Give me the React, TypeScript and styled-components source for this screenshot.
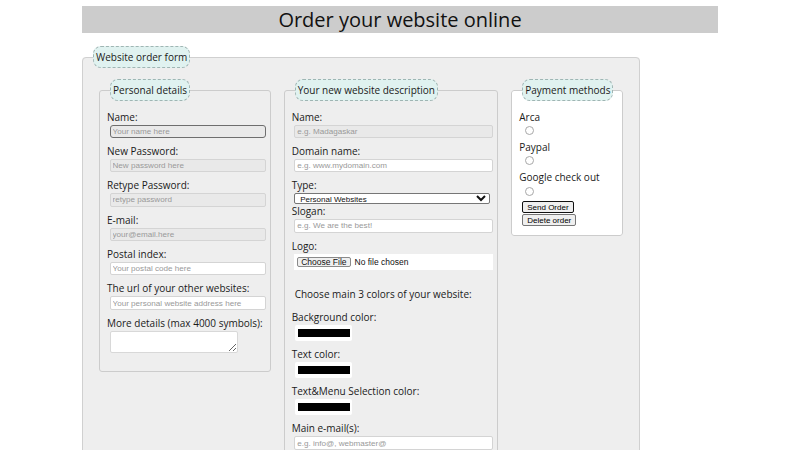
import React from 'react';
import styled, { createGlobalStyle } from 'styled-components';

const GlobalStyle = createGlobalStyle`
    html, body {
        margin: 0;
        padding: 0;
        background: #ffffff;
    }
    body {
        font-family: "Open Sans", "Liberation Sans", sans-serif;
        color: #1a1a1a;
    }
`;

const Page = styled.div`
    width: 636px;
    margin: 6px auto 0;
`;

const Title = styled.h1`
    margin: 0;
    height: 27px;
    background: #cccccc;
    font-size: 20px;
    font-weight: 400;
    line-height: 27px;
    text-align: center;
    color: #111;
`;

const OrderForm = styled.form`
    width: 558px;
    margin-top: 13px;
`;

const OuterSet = styled.fieldset`
    box-sizing: border-box;
    width: 100%;
    min-inline-size: 0;
    margin: 0;
    padding: 11px 10px 24px;
    border: 1px solid #d0d0d0;
    border-radius: 4px;
    background: #eeeeee;
`;

const Legend = styled.legend<{ $offset?: number }>`
    margin-left: ${({ $offset }) => $offset ?? 0}px;
    padding: 3px 2px;
    border: 1px dashed #9fb5b3;
    border-radius: 8px;
    background: #e0f2f0;
    font-size: 10px;
    line-height: 14px;
    color: #1a1a1a;
`;

const Columns = styled.div`
    display: flex;
    align-items: flex-start;
    gap: 13px;
    padding: 0 6px;
`;

const Section = styled.fieldset<{ $width: number; $white?: boolean; $bottom?: number }>`
    box-sizing: border-box;
    width: ${({ $width }) => $width}px;
    min-inline-size: 0;
    margin: 0;
    padding: 8.5px 7px ${({ $bottom }) => $bottom ?? 18}px;
    border: 1px solid #cccccc;
    border-radius: 3px;
    background: ${({ $white }) => ($white ? '#ffffff' : '#eeeeee')};
`;

const Label = styled.label`
    display: block;
    font-size: 10px;
    line-height: 15px;
    white-space: nowrap;
`;

const TextInput = styled.input<{ $width: number; $shaded?: boolean; $active?: boolean }>`
    box-sizing: border-box;
    display: block;
    width: ${({ $width }) => $width}px;
    height: 13.4px;
    margin: 0 0 6px 2.5px;
    padding: 0 2px;
    border: 1px solid ${({ $active }) => ($active ? '#6e6e6e' : '#d4d4d4')};
    border-radius: ${({ $active }) => ($active ? 3 : 2)}px;
    background: ${({ $shaded }) => ($shaded ? '#e9e9e9' : '#ffffff')};
    font: 8.1px "Liberation Sans", Arial, sans-serif;
    color: #333;
    outline: none;

    &::placeholder {
        color: #999999;
    }
`;

const Details = styled.textarea`
    box-sizing: border-box;
    display: block;
    width: 128px;
    height: 22px;
    margin: 0 0 0 2.5px;
    border: 1px solid #d8d8d8;
    border-radius: 2px;
    background: #ffffff;
    font: 8px "Liberation Sans", Arial, sans-serif;
`;

const TypeSelect = styled.select`
    box-sizing: border-box;
    display: block;
    width: 196px;
    height: 11px;
    margin: 0 0 0 2.5px;
    padding: 0 1px;
    border: 1px solid #767676;
    border-radius: 2px;
    background: #ffffff;
    font: 8px "Liberation Sans", Arial, sans-serif;
    color: #111;
`;

const FileBox = styled.div`
    box-sizing: border-box;
    display: flex;
    align-items: center;
    gap: 4px;
    width: 199px;
    height: 16px;
    margin-left: 2.5px;
    padding: 0 3px;
    background: #ffffff;
    font: 8.5px "Liberation Sans", Arial, sans-serif;
    color: #111;
`;

const FileButton = styled.button`
    box-sizing: border-box;
    height: 10px;
    padding: 0 3px;
    border: 1px solid #8a8a8a;
    border-radius: 2px;
    background: #efefef;
    font: inherit;
    line-height: 8px;
    color: #111;
`;

const Hint = styled.p`
    margin: 17.8px 0 8px 3px;
    font-size: 10px;
    line-height: 15px;
`;

const Swatch = styled.span`
    box-sizing: border-box;
    display: block;
    width: 57px;
    height: 16px;
    margin: 0 0 6px 3.5px;
    padding: 4px 2.5px;
    border-radius: 2px;
    background: #ffffff;
`;

const SwatchFill = styled.span<{ $color: string }>`
    display: block;
    height: 100%;
    background: ${({ $color }) => $color};
`;

const Radio = styled.input`
    appearance: none;
    box-sizing: border-box;
    display: block;
    width: 9px;
    height: 9px;
    margin: 1.3px 0 5.2px 5.5px;
    border: 1px solid #a8a8a8;
    border-radius: 50%;
    background: #ffffff;
`;

const Actions = styled.div`
    display: flex;
    flex-direction: column;
    align-items: flex-start;
    gap: 0.7px;
    margin: 1.3px 0 0 3px;
`;

const ActionButton = styled.button<{ $primary?: boolean }>`
    box-sizing: border-box;
    height: 12.3px;
    padding: 0 4px;
    border: ${({ $primary }) => ($primary ? '1.5px solid #111' : '1px solid #767676')};
    border-radius: 2px;
    background: #efefef;
    font: 8px "Liberation Sans", Arial, sans-serif;
    line-height: 9px;
    color: #000;
`;

type Field = { label: string; placeholder: string; shaded?: boolean; active?: boolean };

const personalFields: Field[] = [
    { label: 'Name:', placeholder: 'Your name here', shaded: true, active: true },
    { label: 'New Password:', placeholder: 'New password here', shaded: true },
    { label: 'Retype Password:', placeholder: 'retype password', shaded: true },
    { label: 'E-mail:', placeholder: 'your@email.here', shaded: true },
    { label: 'Postal index:', placeholder: 'Your postal code here' },
    { label: 'The url of your other websites:', placeholder: 'Your personal website address here' },
];

const colorFields = ['Background color:', 'Text color:', 'Text&Menu Selection color:'];

const payments = ['Arca', 'Paypal', 'Google check out'];

const App: React.FC = () => {
    return (
        <>
            <GlobalStyle />
            <Page>
                <Title>Order your website online</Title>
                <OrderForm onSubmit={(e) => e.preventDefault()}>
                    <OuterSet>
                        <Legend>Website order form</Legend>
                        <Columns>
                            {/* personal details */}
                            <Section $width={172} $bottom={18}>
                                <Legend $offset={3}>Personal details</Legend>
                                {personalFields.map((f) => (
                                    <div key={f.label}>
                                        <Label>{f.label}</Label>
                                        <TextInput
                                            $width={156}
                                            $shaded={f.shaded}
                                            $active={f.active}
                                            placeholder={f.placeholder}
                                        />
                                    </div>
                                ))}
                                <Label>More details (max 4000 symbols):</Label>
                                <Details />
                            </Section>

                            {/* website description */}
                            <Section $width={215} $bottom={20}>
                                <Legend $offset={3}>Your new website description</Legend>
                                <Label>Name:</Label>
                                <TextInput $width={199} $shaded placeholder="e.g. Madagaskar" />
                                <Label>Domain name:</Label>
                                <TextInput $width={199} placeholder="e.g. www.mydomain.com" />
                                <Label>Type:</Label>
                                <TypeSelect defaultValue="personal">
                                    <option value="personal">Personal Websites</option>
                                    <option value="business">Business Websites</option>
                                    <option value="shop">Online Shops</option>
                                </TypeSelect>
                                <Label>Slogan:</Label>
                                <TextInput $width={199} placeholder="e.g. We are the best!" />
                                <Label>Logo:</Label>
                                <FileBox>
                                    <FileButton type="button">Choose File</FileButton>
                                    <span>No file chosen</span>
                                </FileBox>
                                <Hint>Choose main 3 colors of your website:</Hint>
                                {colorFields.map((c) => (
                                    <div key={c}>
                                        <Label>{c}</Label>
                                        <Swatch>
                                            <SwatchFill $color="#000000" />
                                        </Swatch>
                                    </div>
                                ))}
                                <Label>Main e-mail(s):</Label>
                                <TextInput $width={199} placeholder="e.g. info@, webmaster@" />
                            </Section>

                            {/* payment */}
                            <Section $width={112} $white $bottom={9}>
                                <Legend $offset={3}>Payment methods</Legend>
                                {payments.map((p) => (
                                    <div key={p}>
                                        <Label>{p}</Label>
                                        <Radio type="radio" name="payment" />
                                    </div>
                                ))}
                                <Actions>
                                    <ActionButton type="submit" $primary>Send Order</ActionButton>
                                    <ActionButton type="reset">Delete order</ActionButton>
                                </Actions>
                            </Section>
                        </Columns>
                    </OuterSet>
                </OrderForm>
            </Page>
        </>
    );
};

export default App;
